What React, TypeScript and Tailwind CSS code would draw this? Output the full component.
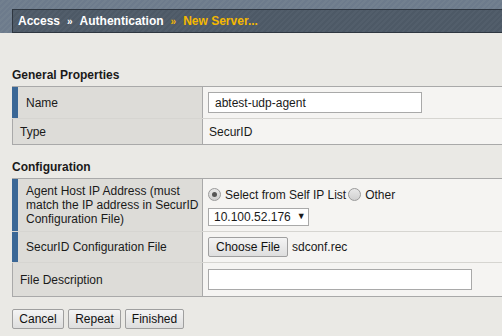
const font = { fontFamily: '"Liberation Sans", Arial, sans-serif' };

const Radio = ({ checked }: { checked?: boolean }) => (
  <span className="inline-flex h-[13px] w-[13px] shrink-0 items-center justify-center rounded-full border border-[#9a9a9a] bg-gradient-to-b from-[#e8e8e8] to-[#d0d0d0]">
    {checked && <span className="h-[5px] w-[5px] rounded-full bg-[#555]" />}
  </span>
);

const Button = ({ label, className = '' }: { label: string; className?: string }) => (
  <button
    className={`h-[20px] whitespace-nowrap rounded-[2px] border border-[#9f9f9f] bg-gradient-to-b from-[#f4f4f4] to-[#dedede] px-[4px] text-[12px] leading-none text-[#111] ${className}`}
  >
    {label}
  </button>
);

interface RowProps {
  label: React.ReactNode;
  required?: boolean;
  children: React.ReactNode;
  height: string;
  last?: boolean;
}

const Row = ({ label, required, children, height, last }: RowProps) => (
  <div className={`flex ${height} ${last ? '' : 'border-b border-[#d6d5d1]'}`}>
    <div
      className={`flex w-[191px] shrink-0 items-center border-r border-[#a9a9a9] bg-[#dddcd8] ${
        required ? 'border-l-[6px] border-l-[#3a6796] pl-[8px]' : 'border-l border-l-[#a9a9a9] pl-[7px]'
      }`}
    >
      {label}
    </div>
    <div className="flex flex-1 items-center whitespace-nowrap bg-[#f5f4f2] pl-[5px]">{children}</div>
  </div>
);

export default function App() {
  return (
    <div className="h-[336px] w-[502px] overflow-hidden bg-[#eae9e5] text-[12px] text-[#1a1a1a]" style={font}>
      <div className="h-[33px] bg-[repeating-linear-gradient(135deg,#6d7b8c_0px,#6d7b8c_2px,#72808f_2px,#72808f_4px)] pl-[12px] pt-[9px]">
        <div className="flex h-[24px] items-center gap-[7px] border-y border-l border-[#2e3640] bg-[repeating-linear-gradient(135deg,#4d5966_0px,#4d5966_2px,#525e6b_2px,#525e6b_4px)] pl-[5px] text-[12px] font-bold text-white">
          <span>Access</span>
          <span className="text-[10px]">»</span>
          <span>Authentication</span>
          <span className="text-[10px] text-[#f0b400]">»</span>
          <span className="text-[#f5b800]">New Server...</span>
        </div>
      </div>

      <div className="pl-[12px]">
        <div className="mt-[35px] mb-[4px] h-[14px] font-bold leading-[14px]">General Properties</div>
        <div className="border-y border-[#a9a9a9]">
          <Row label="Name" required height="h-[32px]">
            <div className="flex h-[21px] w-[214px] items-center border border-[#a9a9a9] bg-white pl-[6px]">
              abtest-udp-agent
            </div>
          </Row>
          <Row label="Type" height="h-[25px]" last>
            <span className="pl-[1px]">SecurID</span>
          </Row>
        </div>

        <div className="mt-[15px] mb-[4px] h-[14px] font-bold leading-[14px]">Configuration</div>
        <div className="border-y border-[#a9a9a9]">
          <Row
            label={
              <span className="whitespace-nowrap leading-[14px]">
                Agent Host IP Address (must
                <br />
                match the IP address in SecurID
                <br />
                Configuration File)
              </span>
            }
            required
            height="h-[53px]"
          >
            <div className="flex flex-col gap-[4px] pt-[1px]">
              <div className="flex items-center">
                <Radio checked />
                <span className="ml-[4px]">Select from Self IP List</span>
                <span className="ml-[2px] flex">
                  <Radio />
                </span>
                <span className="ml-[4px]">Other</span>
              </div>
              <div className="flex h-[18px] w-[101px] items-center border border-[#a9a9a9] bg-white pl-[5px]">
                10.100.52.176
                <span className="ml-[6px] text-[9px]">▼</span>
              </div>
            </div>
          </Row>
          <Row label="SecurID Configuration File" required height="h-[31px]">
            <Button label="Choose File" className="w-[80px]" />
            <span className="ml-[4px]">sdconf.rec</span>
          </Row>
          <Row label="File Description" height="h-[33px]" last>
            <div className="h-[21px] w-[264px] border border-[#a9a9a9] bg-white" />
          </Row>
        </div>

        <div className="mt-[12px] flex gap-[4px]">
          <Button label="Cancel" className="h-[19px] w-[52px]" />
          <Button label="Repeat" className="h-[19px] w-[53px]" />
          <Button label="Finished" className="h-[19px] w-[59px]" />
        </div>
      </div>
    </div>
  );
}
